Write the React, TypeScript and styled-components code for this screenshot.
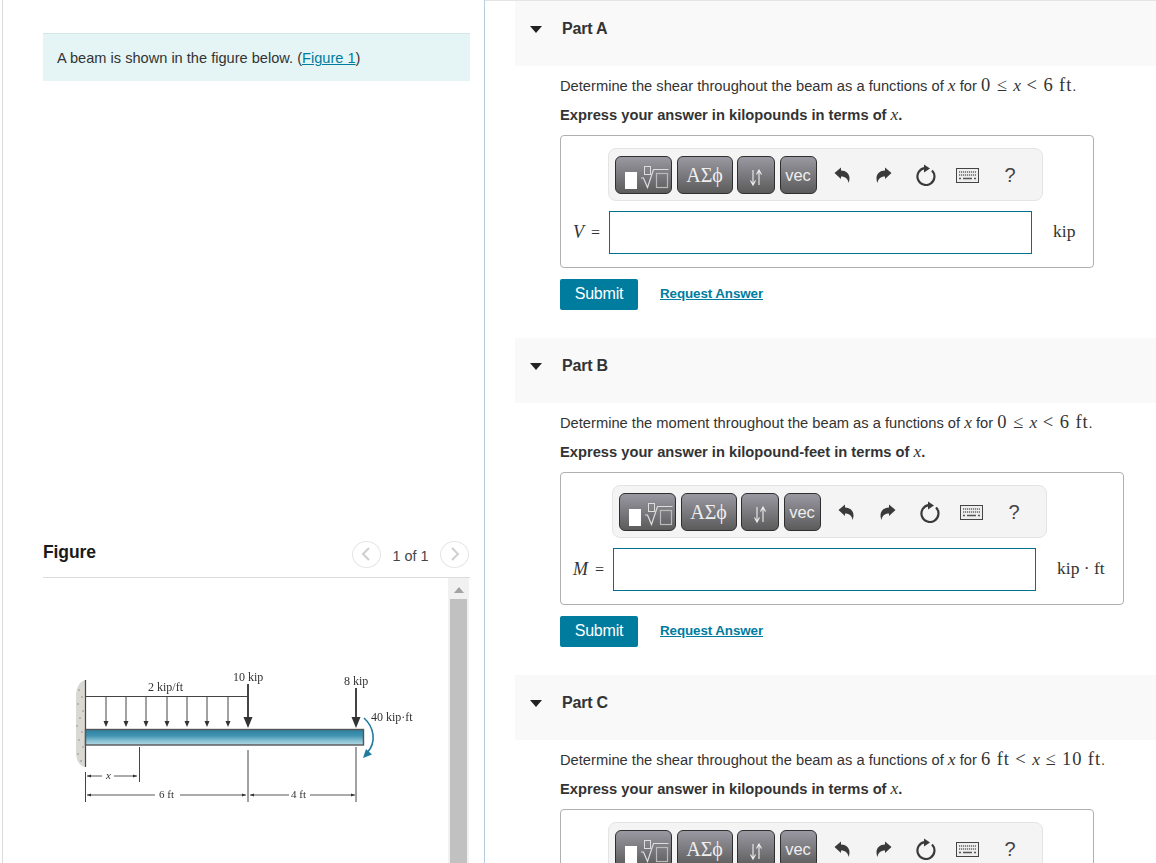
import React from 'react';
import styled, { createGlobalStyle } from 'styled-components';

const GlobalStyle = createGlobalStyle`
  html, body {
    margin: 0;
    padding: 0;
    height: 100%;
    overflow: hidden;
    background: #fff;
  }
  body {
    font-family: 'Liberation Sans', Arial, sans-serif;
    color: #333;
  }
`;

const Page = styled.div`
  display: flex;
  width: 1156px;
  height: 863px;
  overflow: hidden;
`;

const LeftPane = styled.section`
  box-sizing: border-box;
  flex: none;
  width: 483px;
  height: 863px;
  margin-left: 2px;
  padding: 33px 14px 0 40px;
  border-left: 1px solid #dcdcdc;
  border-right: 1px solid #b9cde0;
  overflow: hidden;
`;

const Intro = styled.div`
  box-sizing: border-box;
  height: 48px;
  padding: 16px 14px 0;
  background: #e5f5f6;
  border-top: 1px solid #d5e6e9;
  font-size: 14.6px;
  color: #333;
`;

const TextLink = styled.a`
  color: #007c9f;
  text-decoration: underline;
`;

const FigureHead = styled.div`
  display: flex;
  align-items: center;
  height: 36px;
  margin-top: 459px;
  padding-bottom: 1px;
  border-bottom: 1px solid #dcdcdc;
`;

const FigureTitle = styled.h2`
  flex: 1;
  margin: -11px 0 0;
  font-size: 17.5px;
  font-weight: 700;
  color: #1a1a1a;
  letter-spacing: -0.1px;
`;

const Pager = styled.div`
  display: flex;
  align-items: center;
  gap: 11.5px;
  margin: -8px 1px 0 0;
  font-size: 14.4px;
  color: #444;
`;

const PagerCount = styled.span`
  margin-top: 4px;
`;

const PagerButton = styled.span`
  display: flex;
  align-items: center;
  justify-content: center;
  box-sizing: border-box;
  width: 29px;
  height: 27px;
  border: 1px solid #e6e6e6;
  border-radius: 50%;
`;

const FigureBody = styled.div`
  display: flex;
  justify-content: space-between;
  height: 290px;
`;

const BeamDrawing = styled.svg`
  flex: none;
  width: 370px;
  height: 160px;
  margin: 82px 0 0 17px;
  filter: blur(0.4px);
`;

const Scrollbar = styled.div`
  display: flex;
  flex-direction: column;
  align-items: center;
  box-sizing: border-box;
  width: 21px;
  margin-right: 1px;
  padding: 0 2px;
  background: #f1f1f1;
`;

const ScrollArrow = styled.span`
  width: 0;
  height: 0;
  margin: 9px 0 6px;
  border-left: 5px solid transparent;
  border-right: 5px solid transparent;
  border-bottom: 6px solid #a3a3a3;
`;

const ScrollThumb = styled.div`
  width: 100%;
  flex: 1;
  background: #c1c1c1;
`;

const RightPane = styled.main`
  flex: 1;
  min-width: 0;
  padding-left: 30px;
  border-top: 1px solid #e4e4e4;
`;

const PartHeader = styled.header`
  display: flex;
  align-items: flex-start;
  box-sizing: border-box;
  height: 65px;
  padding: 19px 0 0 15px;
  background: #f9f9f9;
`;

const Caret = styled.span`
  flex: none;
  width: 0;
  height: 0;
  margin: 6px 20px 0 0;
  border-left: 6px solid transparent;
  border-right: 6px solid transparent;
  border-top: 7px solid #222;
`;

const PartTitle = styled.h3`
  margin: 0;
  font-size: 16px;
  line-height: 18px;
  font-weight: 700;
  color: #333;
  letter-spacing: -0.2px;
`;

const PartBody = styled.div`
  padding: 9px 0 0 45px;
  height: 272px;
  box-sizing: border-box;
`;

const Prompt = styled.p`
  margin: 0;
  height: 29px;
  font-size: 14.7px;
  line-height: 20px;
  color: #333;
`;

const Instruction = styled(Prompt)`
  height: 20px;
  font-weight: 700;
`;

const MathRun = styled.span`
  font-family: 'Liberation Serif', 'Times New Roman', serif;
  font-size: 18.5px;
  letter-spacing: 0.9px;
`;

const MathVar = styled.i`
  font-family: 'Liberation Serif', 'Times New Roman', serif;
  font-size: 17.5px;
  font-weight: 400;
  letter-spacing: 0;
`;

const AnswerBox = styled.div`
  display: inline-grid;
  grid-template-columns: auto 423px auto;
  align-items: center;
  box-sizing: border-box;
  margin-top: 11px;
  padding: 12px 18px 13px 12px;
  border: 1px solid #b0b0b0;
  border-radius: 4px;
`;

const Toolbar = styled.div`
  grid-column: 2 / 4;
  display: flex;
  align-items: center;
  box-sizing: border-box;
  width: 435px;
  height: 53px;
  margin: 0 0 10px -1px;
  padding: 1px 6px 0;
  background: #f4f4f4;
  border: 1px solid #e4e4e4;
  border-radius: 8px;
`;

const ToolButton = styled.span<{ $width: number; $serif?: boolean }>`
  display: flex;
  align-items: center;
  justify-content: center;
  flex: none;
  box-sizing: border-box;
  width: ${(p) => p.$width}px;
  height: 38px;
  margin-right: 4.5px;
  border: 1px solid #2f2f2f;
  border-radius: 6px;
  background: linear-gradient(#9a98a1, #5b5b5b);
  color: #eee;
  font-family: ${(p) => (p.$serif ? "'Liberation Serif', serif" : "'Liberation Sans', sans-serif")};
  font-size: ${(p) => (p.$serif ? 20 : 16.5)}px;
`;

const ToolIcon = styled.span<{ $left: number }>`
  display: flex;
  align-items: center;
  justify-content: center;
  flex: none;
  width: 24px;
  margin-left: ${(p) => p.$left}px;
  color: #3a3a3a;
`;

const HelpMark = styled(ToolIcon)`
  font-size: 20px;
  color: #444;
`;

const VarLabel = styled.span`
  margin-right: 9px;
  font-family: 'Liberation Serif', serif;
  font-size: 16px;
  word-spacing: 3px;
  color: #333;
  white-space: nowrap;
`;

const VarName = styled.i`
  font-size: 18px;
`;

const AnswerInput = styled.div`
  box-sizing: border-box;
  width: 423px;
  height: 43px;
  background: #fff;
  border: 1px solid #00708f;
`;

const Unit = styled.span`
  margin: -2px 0 0 21px;
  font-family: 'Liberation Serif', serif;
  font-size: 17.5px;
  color: #333;
  white-space: nowrap;
`;

const Actions = styled.div`
  display: flex;
  align-items: center;
  gap: 22px;
  margin-top: 11px;
`;

const SubmitButton = styled.span`
  display: flex;
  align-items: center;
  justify-content: center;
  box-sizing: border-box;
  width: 78px;
  height: 31px;
  padding-bottom: 2px;
  background: #007c9f;
  border-radius: 2px;
  color: #fff;
  font-size: 16px;
  letter-spacing: -0.2px;
`;

const RequestLink = styled(TextLink)`
  margin-top: -2px;
  font-size: 13.4px;
  font-weight: 700;
  letter-spacing: -0.1px;
`;

const Chevron = ({ flip }: { flip?: boolean }) => (
  <svg width="10" height="16" viewBox="0 0 10 16" fill="none" stroke="#cfcfcf" strokeWidth="2">
    <path d={flip ? 'M2 2l6 6-6 6' : 'M8 2L2 8l6 6'} />
  </svg>
);

const RadicalIcon = () => (
  <svg width="55" height="36" viewBox="0 0 55 36" fill="none">
    <rect x="9" y="15" width="12" height="17" fill="#fff" />
    <rect x="28.500" y="9.500" width="6" height="8" stroke="#ddd" strokeWidth="1" />
    <path d="M25 21l2.500 0 4 9.500 6-18h15" stroke="#ddd" strokeWidth="1.200" />
    <rect x="40.500" y="16.500" width="11" height="14" stroke="#bbb" strokeWidth="1.200" />
  </svg>
);

const ArrowsIcon = () => (
  <svg width="16" height="18" viewBox="0 0 16 18" fill="none" stroke="#eee" strokeWidth="1.100" style={{ marginTop: 6 }}>
    <path d="M5 1v14M2.500 11.500L5 16l2.500-4.500" />
    <path d="M11 16V2M8.500 5.500L11 1l2.500 4.500" />
  </svg>
);

const UndoIcon = ({ flip }: { flip?: boolean }) => (
  <svg width="16" height="18" viewBox="0 0 16 18" style={flip ? { transform: 'scaleX(-1)' } : undefined}>
    <path
      fill="#3a3a3a"
      d="M0.500 7L7 1.500v3C12 4.500 15.500 8 15.500 12c0 2-.5 4-1 5-.5-4-3-6.500-7.500-6.500V13z"
    />
  </svg>
);

const ResetIcon = () => (
  <svg width="21" height="22" viewBox="0 0 21 22" fill="none">
    <path d="M16 6.500A8.500 8.500 0 1 1 8.500 4.100" stroke="#3a3a3a" strokeWidth="2.200" />
    <path d="M8 0.500l6 4-6 4z" fill="#3a3a3a" />
  </svg>
);

const KeyboardIcon = () => (
  <svg width="23" height="15" viewBox="0 0 23 15" fill="none">
    <rect x="0.500" y="0.500" width="22" height="14" fill="#eee" stroke="#444" />
    <path d="M3 4h17M3 7h17" stroke="#666" strokeWidth="1.400" strokeDasharray="1.200 0.800" />
    <path d="M3 10.500h2M7 10.500h9M18 10.500h2" stroke="#555" strokeWidth="1.400" />
  </svg>
);

type Part = {
  letter: string;
  prompt: string;
  range: React.ReactNode;
  units: string;
  name: string;
  unit: string;
};

const parts: Part[] = [
  {
    letter: 'A',
    prompt: 'shear',
    range: (
      <>
        0 ≤ <MathVar>x</MathVar> &lt; 6 ft
      </>
    ),
    units: 'kilopounds',
    name: 'V',
    unit: 'kip',
  },
  {
    letter: 'B',
    prompt: 'moment',
    range: (
      <>
        0 ≤ <MathVar>x</MathVar> &lt; 6 ft
      </>
    ),
    units: 'kilopound-feet',
    name: 'M',
    unit: 'kip · ft',
  },
  {
    letter: 'C',
    prompt: 'shear',
    range: (
      <>
        6 ft &lt; <MathVar>x</MathVar> ≤ 10 ft
      </>
    ),
    units: 'kilopounds',
    name: 'V',
    unit: 'kip',
  },
];

const loadArrows = [106, 126, 146, 167, 187, 207, 228];
const wallDots = [
  [79, 690], [82, 697], [78, 704], [83, 711], [80, 718], [77, 726], [82, 732], [79, 740], [83, 747], [78, 754], [81, 761],
];

const BeamFigure = () => (
  <BeamDrawing viewBox="60 660 370 160">
    <defs>
      <linearGradient id="beamFill" x1="0" y1="0" x2="0" y2="1">
        <stop offset="0" stopColor="#2e7f9e" />
        <stop offset="0.4" stopColor="#3f93b1" />
        <stop offset="0.75" stopColor="#8cc3d4" />
        <stop offset="1" stopColor="#b5d8e2" />
      </linearGradient>
    </defs>
    <path d="M85 680c-6 2-9 8-9 16v56c0 8 3 14 9 15z" fill="#d9d8d2" />
    {wallDots.map(([x, y]) => (
      <circle key={`${x}-${y}`} cx={x} cy={y} r="0.8" fill="#8d8c86" />
    ))}
    <g stroke="#444" fill="none">
      <path d="M85.500 680v87" strokeWidth="1.200" />
      <path d="M85 696.500h163" strokeWidth="1" />
      {loadArrows.map((x) => (
        <path key={x} d={`M${x} 696v26`} strokeWidth="1" />
      ))}
      <path d="M248 684v36" strokeWidth="2" />
      <path d="M356 688v32" strokeWidth="2" />
      <path d="M139.500 747v35M248 750v52M356 747v55M85.500 772v30" strokeWidth="1" />
      <path d="M87 776h15M114 776h23" strokeWidth="0.900" />
      <path d="M87 795h68M180 795h66M250 795h39M310 795h45" strokeWidth="0.900" />
    </g>
    <g fill="#333">
      {loadArrows.map((x) => (
        <path key={x} d={`M${x - 2.500} 721h5l-2.500 6z`} />
      ))}
      <path d="M243.500 717h9l-4.500 11zM351.500 717h9l-4.500 11z" />
      <path d="M87 776l4-1.500v3zM137 776l-4-1.500v3zM87 795l4-1.500v3zM246 795l-4-1.500v3zM250 795l4-1.500v3zM355 795l-4-1.500v3z" />
    </g>
    <rect x="85.500" y="729.500" width="278" height="15.500" fill="url(#beamFill)" stroke="#555" strokeWidth="1.400" />
    <path d="M364 718c10 9 13 24 3 35" fill="none" stroke="#1f7c9c" strokeWidth="1.600" />
    <path d="M363 758l9-3.500-6-5.500z" fill="#1f7c9c" />
    <g fontFamily="'Liberation Serif', serif" fontSize="12" fill="#333">
      <text x="148" y="691">2 kip/ft</text>
      <text x="233" y="681">10 kip</text>
      <text x="344" y="685">8 kip</text>
      <text x="371" y="721">40 kip·ft</text>
      <text x="106" y="779" fontStyle="italic" fontSize="11">x</text>
      <text x="159" y="798" fontSize="11">6 ft</text>
      <text x="291" y="798" fontSize="11">4 ft</text>
    </g>
  </BeamDrawing>
);

const PartSection = ({ part }: { part: Part }) => (
  <article>
    <PartHeader>
      <Caret />
      <PartTitle>Part {part.letter}</PartTitle>
    </PartHeader>
    <PartBody>
      <Prompt>
        Determine the {part.prompt} throughout the beam as a functions of <MathVar>x</MathVar> for{' '}
        <MathRun>{part.range}</MathRun>.
      </Prompt>
      <Instruction>
        Express your answer in {part.units} in terms of <MathVar>x</MathVar>.
      </Instruction>
      <AnswerBox>
        <span />
        <Toolbar>
          <ToolButton $width={57}>
            <RadicalIcon />
          </ToolButton>
          <ToolButton $width={56} $serif>
            ΑΣϕ
          </ToolButton>
          <ToolButton $width={38}>
            <ArrowsIcon />
          </ToolButton>
          <ToolButton $width={37}>vec</ToolButton>
          <ToolIcon $left={9}>
            <UndoIcon />
          </ToolIcon>
          <ToolIcon $left={18}>
            <UndoIcon flip />
          </ToolIcon>
          <ToolIcon $left={18}>
            <ResetIcon />
          </ToolIcon>
          <ToolIcon $left={17}>
            <KeyboardIcon />
          </ToolIcon>
          <HelpMark $left={19}>?</HelpMark>
        </Toolbar>
        <VarLabel>
          <VarName>{part.name}</VarName> =
        </VarLabel>
        <AnswerInput />
        <Unit>{part.unit}</Unit>
      </AnswerBox>
      <Actions>
        <SubmitButton>Submit</SubmitButton>
        <RequestLink>Request Answer</RequestLink>
      </Actions>
    </PartBody>
  </article>
);

const App: React.FC = () => (
  <>
    <GlobalStyle />
    <Page>
      <LeftPane>
        <Intro>
          A beam is shown in the figure below. (<TextLink>Figure 1</TextLink>)
        </Intro>
        <FigureHead>
          <FigureTitle>Figure</FigureTitle>
          <Pager>
            <PagerButton>
              <Chevron />
            </PagerButton>
            <PagerCount>1 of 1</PagerCount>
            <PagerButton>
              <Chevron flip />
            </PagerButton>
          </Pager>
        </FigureHead>
        <FigureBody>
          <BeamFigure />
          <Scrollbar>
            <ScrollArrow />
            <ScrollThumb />
          </Scrollbar>
        </FigureBody>
      </LeftPane>
      <RightPane>
        {parts.map((part) => (
          <PartSection key={part.letter} part={part} />
        ))}
      </RightPane>
    </Page>
  </>
);

export default App;
